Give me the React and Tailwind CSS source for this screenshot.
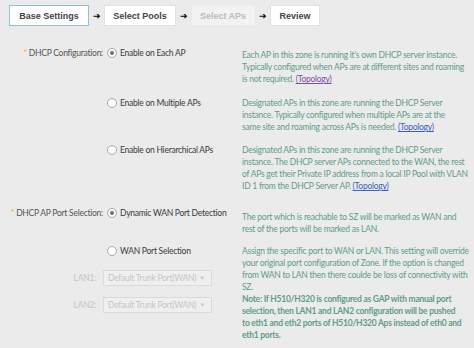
import React from 'react';

const tabs = [
  { label: 'Base Settings', w: 'w-[80px]', state: 'active' },
  { label: 'Select Pools', w: 'w-[72px]', state: 'normal' },
  { label: 'Select APs', w: 'w-[64px]', state: 'disabled' },
  { label: 'Review', w: 'w-[50px]', state: 'normal' },
];

const tabClass = {
  active: 'bg-white border-[#8fc3d3] text-[#444]',
  normal: 'bg-white border-[#e2e2e2] text-[#444]',
  disabled: 'bg-[#f2f2f2] border-[#ececec] text-[#bcbcbc]',
};

const Radio = ({ checked }) => (
  <span className="w-[10px] h-[10px] rounded-full border border-[#a9a9a9] bg-white flex items-center justify-center shrink-0">
    {checked && <span className="w-[4px] h-[4px] rounded-full bg-[#6d6d6d]" />}
  </span>
);

const Option = ({ checked, children }) => (
  <div className="flex items-center gap-[3px] text-[#3a3a3a] whitespace-nowrap">
    <Radio checked={checked} />
    <span>{children}</span>
  </div>
);

const Topology = ({ visited }) => (
  <a className={`underline ${visited ? 'text-[#7b4fa6]' : 'text-[#3d5fc0]'}`}>(Topology)</a>
);

// each description is kept to the reference's own line breaks
const Lines = ({ lines, className = '' }) => (
  <div className={className}>
    {lines.map((l, i) => (
      <div key={i} className="whitespace-nowrap">{l}</div>
    ))}
  </div>
);

const Select = ({ label }) => (
  <div className="flex items-center">
    <span className="w-[103px] text-right pr-[7px] text-[#c4c4c4]">{label}</span>
    <div className="w-[109px] h-[16px] border border-[#dadada] bg-[#efefef] flex items-center justify-between pl-[4px] pr-[6px] text-[#c6c6c6] whitespace-nowrap">
      <span>Default Trunk Port(WAN)</span>
      <span className="text-[6px]">▼</span>
    </div>
  </div>
);

export default function App() {
  return (
    <div className="w-[474px] h-[348px] overflow-hidden bg-[#ebebeb] font-['Lato',sans-serif] text-[8.5px] leading-[12px] tracking-[-0.25px]">
      <div className="flex items-center pl-[9px] pt-[5px] font-['Liberation_Sans',Arial,sans-serif] tracking-normal">
        {tabs.map((t, i) => (
          <React.Fragment key={t.label}>
            {i > 0 && <span className="w-[15px] text-center text-[9px] text-black">➔</span>}
            <div className={`${t.w} h-[21px] border flex items-center justify-center font-bold text-[9px] ${tabClass[t.state]}`}>
              {t.label}
            </div>
          </React.Fragment>
        ))}
      </div>

      <div className="grid grid-cols-[103px_139px_226px] mt-[21px] text-[#5f9c87]">
        <div className="text-right text-[#555] whitespace-nowrap"><span className="text-[#f5a623]">*</span> DHCP Configuration:</div>
        <div className="pl-[4px]"><Option checked>Enable on Each AP</Option></div>
        <Lines
          className="pt-[2px]"
          lines={[
            "Each AP in this zone is running it's own DHCP server instance.",
            'Typically configured when APs are at different sites and roaming',
            <>is not required. <Topology visited /></>,
          ]}
        />

        <div className="mt-[12px]" />
        <div className="mt-[12px] pl-[4px]"><Option>Enable on Multiple APs</Option></div>
        <Lines
          className="mt-[12px]"
          lines={[
            'Designated APs in this zone are running the DHCP Server',
            'instance. Typically configured when multiple APs are at the',
            <>same site and roaming across APs is needed. <Topology /></>,
          ]}
        />

        <div className="mt-[11px]" />
        <div className="mt-[11px] pl-[4px]"><Option>Enable on Hierarchical APs</Option></div>
        <Lines
          className="mt-[11px]"
          lines={[
            'Designated APs in this zone are running the DHCP Server',
            'instance. The DHCP server APs connected to the WAN, the rest',
            'of APs get their Private IP address from a local IP Pool with VLAN',
            <>ID 1 from the DHCP Server AP. <Topology /></>,
          ]}
        />

        <div className="mt-[15px] text-right text-[#555] whitespace-nowrap"><span className="text-[#f5a623]">*</span> DHCP AP Port Selection:</div>
        <div className="mt-[15px] pl-[4px]"><Option checked>Dynamic WAN Port Detection</Option></div>
        <Lines
          className="mt-[19px]"
          lines={[
            'The port which is reachable to SZ will be marked as WAN and',
            'rest of the ports will be marked as LAN.',
          ]}
        />

        <div className="col-span-2 mt-[10px] flex flex-col">
          <div className="pl-[107px]"><Option>WAN Port Selection</Option></div>
          <div className="mt-[13px]"><Select label="LAN1:" /></div>
          <div className="mt-[11px]"><Select label="LAN2:" /></div>
        </div>
        <div className="mt-[10px]">
          <Lines
            lines={[
              'Assign the specific port to WAN or LAN. This setting will override',
              'your original port configuration of Zone. If the option is changed',
              'from WAN to LAN then there coulde be loss of connectivity with',
              'SZ.',
            ]}
          />
          <Lines
            className="font-bold"
            lines={[
              'Note: If H510/H320 is configured as GAP with manual port',
              'selection, then LAN1 and LAN2 configuration will be pushed',
              'to eth1 and eth2 ports of H510/H320 Aps instead of eth0 and',
              'eth1 ports.',
            ]}
          />
        </div>
      </div>
    </div>
  );
}
